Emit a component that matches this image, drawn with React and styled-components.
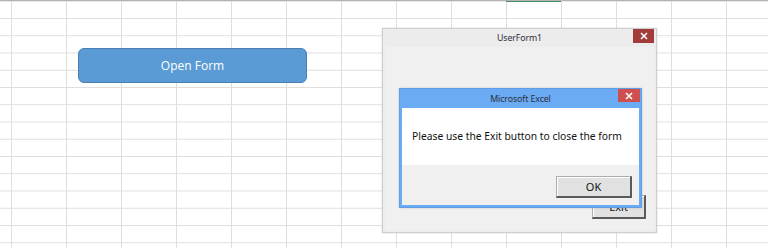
import React from "react";
import styled, { createGlobalStyle } from "styled-components";

const GlobalStyle = createGlobalStyle`
  html, body {
    margin: 0;
    padding: 0;
    background: #ffffff;
  }
  body {
    font-family: "Noto Sans", "Open Sans", sans-serif;
  }
`;

const Sheet = styled.div`
  position: relative;
  width: 768px;
  height: 248px;
  overflow: hidden;
  background-color: #ffffff;
  background-image: linear-gradient(to right, #dedede 1px, transparent 1px),
    linear-gradient(to bottom, #dedede 1px, transparent 1px);
  background-size: 55px 100%, 100% 17.25px;
  background-position: 11px 0, 0 17px;
  border-top: 1px solid #b4b4b4;
  box-sizing: border-box;
`;

const HeaderMark = styled.div`
  position: absolute;
  top: -1px;
  left: 506px;
  width: 55px;
  height: 2px;
  background: #3f8f5e;
`;

const ShapeButton = styled.button`
  position: absolute;
  left: 78px;
  top: 47px;
  width: 229px;
  height: 35px;
  box-sizing: border-box;
  border: 1px solid #4a7fb3;
  border-radius: 6px;
  background: #5b9bd5;
  color: #ffffff;
  font-family: "Open Sans", "Noto Sans", sans-serif;
  font-size: 12px;
  padding: 0;
  cursor: pointer;
`;

const Window = styled.div`
  position: absolute;
  left: ${(p) => p.$x}px;
  top: ${(p) => p.$y}px;
  width: ${(p) => p.$w}px;
  height: ${(p) => p.$h}px;
  box-sizing: border-box;
  display: flex;
  flex-direction: column;
  background: ${(p) => p.$frame};
  border: 1px solid ${(p) => p.$edge};
  box-shadow: 0 0 2px rgba(0, 0, 0, 0.15);
  z-index: ${(p) => p.$z};
`;

const TitleBar = styled.div`
  position: relative;
  flex: 0 0 ${(p) => p.$h}px;
  display: flex;
  align-items: center;
  justify-content: center;
  font-size: 8.8px;
  letter-spacing: -0.1px;
  color: #2e2e3a;
`;

const CloseBox = styled.div`
  position: absolute;
  top: 0;
  right: ${(p) => p.$right}px;
  width: ${(p) => p.$w}px;
  height: ${(p) => p.$h}px;
  background: ${(p) => p.$bg};
  display: flex;
  align-items: center;
  justify-content: center;
`;

const FormBody = styled.div`
  position: relative;
  flex: 1;
  margin: 0 2px 2px;
  background: #f0f0f0;
`;

const MsgInner = styled.div`
  flex: 1;
  margin: 0 2px 2px;
  display: flex;
  flex-direction: column;
  background: #f0f0f0;
`;

const MsgText = styled.div`
  flex: 0 0 57px;
  background: #ffffff;
  box-sizing: border-box;
  padding: 21px 0 0 10px;
  font-size: 10.3px;
  color: #111111;
`;

const MsgFooter = styled.div`
  flex: 1;
  display: flex;
  justify-content: flex-end;
  align-items: flex-start;
  padding: 11px 7px 0 0;
`;

const ClassicButton = styled.button`
  width: ${(p) => p.$w}px;
  height: ${(p) => p.$h}px;
  box-sizing: border-box;
  padding: 0;
  background: #e1e1e1;
  border: 1px solid #adadad;
  border-right: 2px solid #5a5a5a;
  border-bottom: 2px solid #5a5a5a;
  box-shadow: inset 1px 1px 0 #ffffff;
  font-family: "Noto Sans", "Open Sans", sans-serif;
  font-size: 11px;
  color: #111111;
`;

const ExitPlace = styled.div`
  position: absolute;
  left: 207px;
  top: 147px;
`;

const Cross = () => (
  <svg width="8" height="8" viewBox="0 0 8 8">
    <path d="M1 1 L7 7 M7 1 L1 7" stroke="#ffffff" strokeWidth="1.6" />
  </svg>
);

export default function App() {
  return (
    <>
      <GlobalStyle />
      <Sheet>
        <HeaderMark />
        <ShapeButton>Open Form</ShapeButton>

        <Window $x={382} $y={27} $w={275} $h={205} $frame="#ececec" $edge="#cfcfcf" $z={1}>
          <TitleBar $h={18}>
            UserForm1
            <CloseBox $right={2} $w={21} $h={14} $bg="#a33b3b">
              <Cross />
            </CloseBox>
          </TitleBar>
          <FormBody>
            <ExitPlace>
              <ClassicButton $w={54} $h={24}>Exit</ClassicButton>
            </ExitPlace>
          </FormBody>
        </Window>

        <Window $x={399} $y={87} $w={243} $h={120} $frame="#6aabf4" $edge="#5d9de6" $z={2}>
          <TitleBar $h={19}>
            Microsoft Excel
            <CloseBox $right={1} $w={22} $h={13} $bg="#cf4f4f">
              <Cross />
            </CloseBox>
          </TitleBar>
          <MsgInner>
            <MsgText>Please use the Exit button to close the form</MsgText>
            <MsgFooter>
              <ClassicButton $w={76} $h={22}>OK</ClassicButton>
            </MsgFooter>
          </MsgInner>
        </Window>
      </Sheet>
    </>
  );
}
